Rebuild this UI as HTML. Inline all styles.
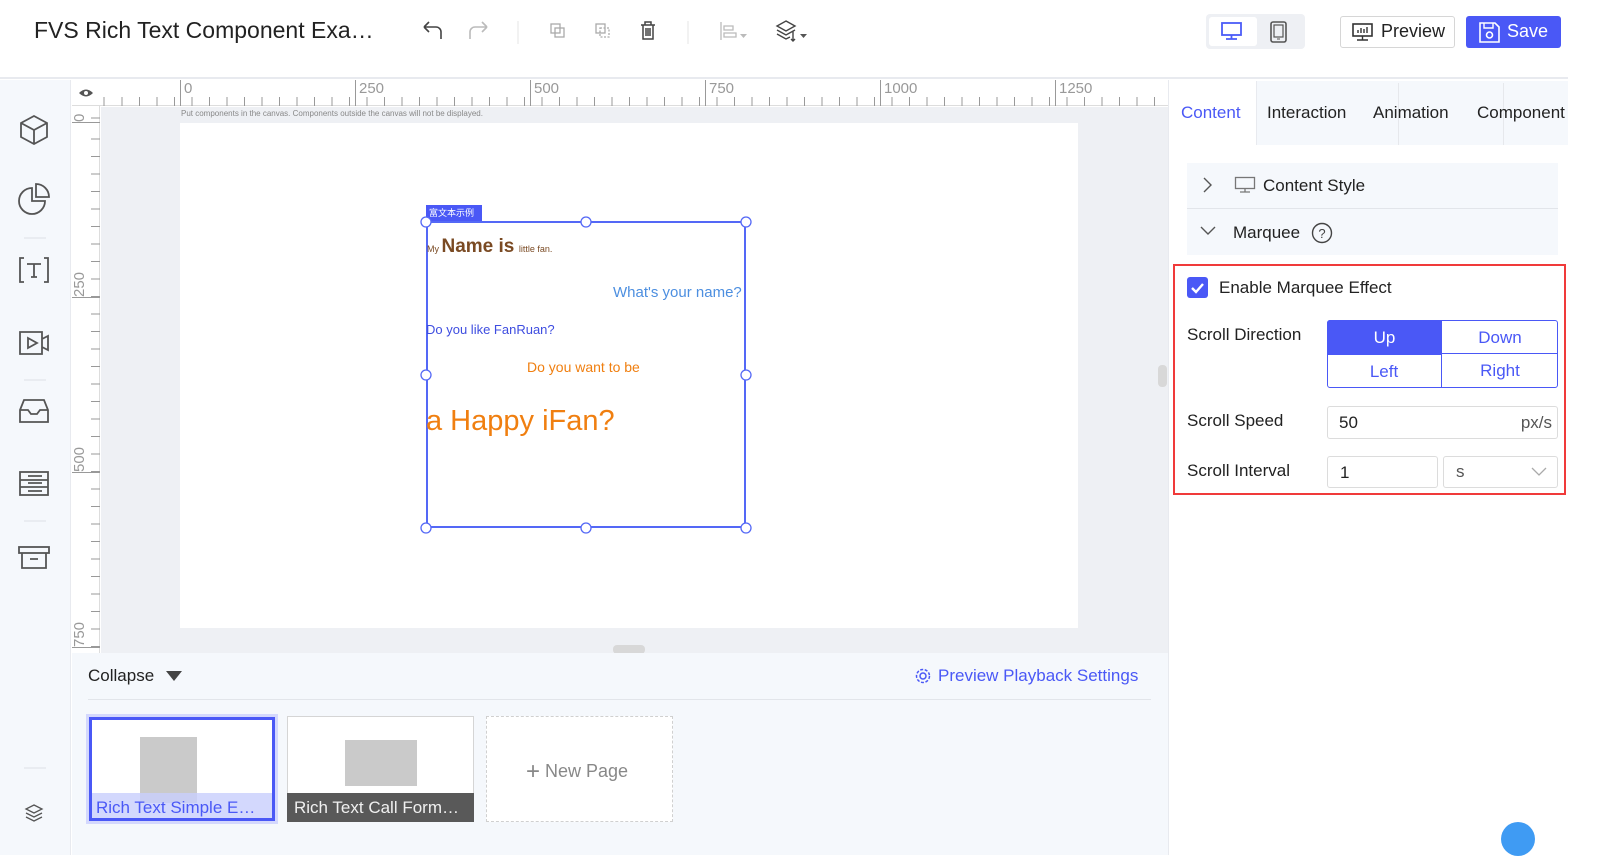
<!DOCTYPE html>
<html><head><meta charset="utf-8"><style>
*{box-sizing:border-box;margin:0;padding:0}
body{width:1610px;height:855px;overflow:hidden;background:#fff;font-family:"Liberation Sans","Noto Sans CJK SC",sans-serif;color:#222;position:relative}
.a{position:absolute}
.ic{stroke:#555;fill:none;stroke-width:1.6}
</style></head><body>
<!-- top bar -->
<div class="a" style="left:0;top:0;width:1568px;height:79px;background:#fff;border-bottom:2px solid #e8eaef"></div>
<div class="a" style="left:34px;top:17px;font-size:23px;color:#222">FVS Rich Text Component Exa…</div>
<svg class="a" style="left:418px;top:18px" width="400" height="28" viewBox="0 0 400 28">
 <path d="M6 9h12a5 5 0 0 1 5 5v7M6 9l5-5M6 9l5 5" stroke="#444" stroke-width="1.6" fill="none"/>
 <path d="M69 9H57a5 5 0 0 0-5 5v7M69 9l-5-5M69 9l-5 5" stroke="#bbb" stroke-width="1.6" fill="none"/>
 <line x1="100" y1="3" x2="100" y2="26" stroke="#e5e5e5"/>
 <rect x="133" y="6" width="9" height="9" stroke="#aaa" fill="none" stroke-width="1.3"/><rect x="137" y="10" width="9" height="9" stroke="#aaa" fill="none" stroke-width="1.3"/>
 <rect x="178" y="6" width="9" height="9" stroke="#aaa" fill="none" stroke-width="1.3"/><rect x="182" y="10" width="9" height="9" stroke="#aaa" fill="none" stroke-dasharray="2 1.5" stroke-width="1.3"/>
 <path d="M223 7h14M227 7V4h6v3M225 7v14h10V7M228 10v8M230 10v8M232 10v8" stroke="#444" stroke-width="1.5" fill="none"/>
 <line x1="270" y1="3" x2="270" y2="26" stroke="#e5e5e5"/>
 <path d="M303 4v18M306 8h9v4h-9zM306 15h12v4h-12z" stroke="#bbb" stroke-width="1.3" fill="none"/><path d="M322 16h7l-3.5 4z" fill="#bbb"/>
 <path d="M368 3l9 5-9 5-9-5zM359 12l9 5 9-5M359 16l9 5 4-2M375 13v10M373 21l2 2 2-2" stroke="#444" stroke-width="1.4" fill="none"/><path d="M382 16h7l-3.5 4z" fill="#555"/>
</svg>
<div class="a" style="left:1206px;top:14px;width:99px;height:35px;background:#eef0f4;border-radius:4px"></div>
<div class="a" style="left:1209px;top:17px;width:48px;height:29px;background:#fff;border-radius:3px"></div>
<svg class="a" style="left:1220px;top:21px" width="24" height="20"><rect x="2" y="2" width="19" height="12" stroke="#4b5cf7" fill="none" stroke-width="1.8"/><path d="M11.5 14v4M6 18h11" stroke="#4b5cf7" stroke-width="1.8"/></svg>
<svg class="a" style="left:1269px;top:20px" width="20" height="24"><rect x="2" y="2" width="15" height="20" rx="2" stroke="#555" fill="none" stroke-width="1.6"/><rect x="5" y="5" width="9" height="12" stroke="#555" fill="none" stroke-width="1.2"/><path d="M8 19h3" stroke="#555"/></svg>
<div class="a" style="left:1340px;top:16px;width:115px;height:32px;border:1px solid #d6d6d6;border-radius:3px;background:#fff"></div>
<svg class="a" style="left:1351px;top:22px" width="24" height="20"><rect x="2" y="2" width="19" height="12" stroke="#333" fill="none" stroke-width="1.6"/><path d="M11.5 14v4M6 18h11M7 11V8M10 11V6M13 11V7M16 11V5" stroke="#333" stroke-width="1.4"/></svg>
<div class="a" style="left:1381px;top:21px;font-size:18px;color:#222">Preview</div>
<div class="a" style="left:1466px;top:16px;width:95px;height:32px;background:#4a58f6;border-radius:3px"></div>
<svg class="a" style="left:1478px;top:21px" width="24" height="24"><path d="M2 2h15l4 4v15H2z" stroke="#fff" fill="none" stroke-width="1.6"/><path d="M6 2v5h9V2" stroke="#fff" fill="none" stroke-width="1.4"/><circle cx="11.5" cy="14" r="3" stroke="#fff" fill="none" stroke-width="1.6"/></svg>
<div class="a" style="left:1507px;top:21px;font-size:18px;color:#fff">Save</div>

<!-- left sidebar -->
<div class="a" style="left:0;top:80px;width:71px;height:775px;background:#f5f8fc;border-right:1px solid #e8eaef"></div>
<svg class="a" style="left:14px;top:110px" width="42" height="720" viewBox="0 0 42 720">
 <g stroke="#555" fill="none" stroke-width="1.8">
 <path d="M20 6l13 7v14l-13 7-13-7V13zM7 13l13 7 13-7M20 20v14"/>
 <path d="M18 78a13 13 0 1 0 13 13H18z"/><path d="M22 74v13h13A13 13 0 0 0 22 74z"/>
 <path d="M6 152v-4h4M30 148h4v4M34 168v4h-4M10 172H6v-4M6 150v20M34 150v20"/><path d="M13 154h14M20 154v13M17 167h6"/>
 <path d="M6 222h22v22H6zM28 229l6-3v14l-6-3"/><path d="M14 228l9 5-9 5z"/>
 <path d="M6 300l4-10h20l4 10v12H6zM6 300h8l3 4h6l3-4h8"/>
 <rect x="6" y="362" width="28" height="23"/><path d="M6 370h28M6 377h28M14 366h14M14 373h14M14 381h14"/>
 <rect x="5" y="437" width="30" height="6"/><path d="M8 443v15h24v-15M16 449h8"/>
 </g>
 <path d="M10 128h22M10 270h22M10 411h22M10 658h22" stroke="#e2e5ea" stroke-width="1.2"/>
 <g stroke="#555" fill="none" stroke-width="1.3"><path d="M20 695l8 4-8 4-8-4zM12 703l8 4 8-4M12 707l8 4 8-4"/></g>
</svg>

<!-- rulers -->
<div class="a" style="left:72px;top:80px;width:1096px;height:26px;background:#fff;border-bottom:1px solid #ddd"></div>
<div class="a" style="left:100px;top:97px;width:1068px;height:9px;background:repeating-linear-gradient(90deg,transparent 0,transparent 16.5px,#999 16.5px,#999 17.5px);background-position:5px 0"></div>
<div class="a" style="left:72px;top:106px;width:28px;height:548px;background:#fff;border-right:1px solid #ddd"></div>
<div class="a" style="left:91px;top:106px;width:9px;height:546px;background:repeating-linear-gradient(180deg,transparent 0,transparent 16.5px,#999 16.5px,#999 17.5px);background-position:0 16px"></div>
<svg class="a" style="left:78px;top:87px" width="16" height="12"><path d="M1 6q7-7 14 0q-7 7-14 0z" fill="#555"/><circle cx="8" cy="6" r="2" fill="#fff"/></svg>
<div class="a" style="left:180px;top:80px;font-size:15px;color:#999;line-height:18px">
<div class="a" style="left:0;top:0;border-left:1px solid #999;height:26px;padding-left:3px">0</div>
<div class="a" style="left:175px;top:0;border-left:1px solid #999;height:26px;padding-left:3px">250</div>
<div class="a" style="left:350px;top:0;border-left:1px solid #999;height:26px;padding-left:3px">500</div>
<div class="a" style="left:525px;top:0;border-left:1px solid #999;height:26px;padding-left:3px">750</div>
<div class="a" style="left:700px;top:0;border-left:1px solid #999;height:26px;padding-left:3px">1000</div>
<div class="a" style="left:875px;top:0;border-left:1px solid #999;height:26px;padding-left:3px">1250</div>
</div>
<div class="a" style="left:72px;top:122px;width:28px;font-size:15px;color:#999">
<div class="a" style="left:0;top:0;width:28px;border-top:1px solid #999"></div>
<div class="a" style="left:0;top:175px;width:28px;border-top:1px solid #999"></div>
<div class="a" style="left:0;top:350px;width:28px;border-top:1px solid #999"></div>
<div class="a" style="left:0;top:525px;width:28px;border-top:1px solid #999"></div>
<div class="a" style="left:0;top:-9px;transform:rotate(-90deg);transform-origin:0 0;top:0px;line-height:16px">0</div>
<div class="a" style="left:0;top:175px;transform:rotate(-90deg);transform-origin:0 0;line-height:16px">250</div>
<div class="a" style="left:0;top:350px;transform:rotate(-90deg);transform-origin:0 0;line-height:16px">500</div>
<div class="a" style="left:0;top:525px;transform:rotate(-90deg);transform-origin:0 0;line-height:16px">750</div>
</div>

<!-- canvas -->
<div class="a" style="left:101px;top:107px;width:1067px;height:546px;background:#eef0f4"></div>
<div class="a" style="left:181px;top:109px;font-size:8px;color:#888">Put components in the canvas. Components outside the canvas will not be displayed.</div>
<div class="a" style="left:180px;top:123px;width:898px;height:505px;background:#fff"></div>
<div class="a" style="left:1158px;top:365px;width:9px;height:22px;background:#d8d8d8;border-radius:4px"></div>
<div class="a" style="left:613px;top:645px;width:32px;height:9px;background:#d8d8d8;border-radius:4px"></div>
<!-- component -->
<div class="a" style="left:426px;top:205px;width:56px;height:16px;background:#4a58f6;color:#fff;font-size:9px;line-height:16px;padding-left:3px">富文本示例一</div>
<div class="a" style="left:426px;top:221px;width:320px;height:307px;border:2px solid #5468f6"></div>
<div class="a" style="left:427px;top:236px;white-space:nowrap;color:#7a4a23"><span style="font-size:9px">My </span><b style="font-size:19px">Name is</b> <span style="font-size:9px">little fan.</span></div>
<div class="a" style="left:613px;top:284px;font-size:15px;color:#4d8fe0">What's your name?</div>
<div class="a" style="left:426px;top:322px;font-size:13px;color:#3e4de0">Do you like FanRuan?</div>
<div class="a" style="left:527px;top:359px;font-size:14px;color:#f07f10">Do you want to be</div>
<div class="a" style="left:426px;top:405px;font-size:29px;color:#f07f10">a Happy iFan?</div>
<svg class="a" style="left:418px;top:214px" width="340" height="322"><g fill="#fff" stroke="#5468f6" stroke-width="1.3"><circle cx="8" cy="8" r="5"/><circle cx="168" cy="8" r="5"/><circle cx="328" cy="8" r="5"/><circle cx="8" cy="161" r="5"/><circle cx="328" cy="161" r="5"/><circle cx="8" cy="314" r="5"/><circle cx="168" cy="314" r="5"/><circle cx="328" cy="314" r="5"/></g></svg>

<!-- bottom panel -->
<div class="a" style="left:72px;top:653px;width:1096px;height:202px;background:#f5f8fc"></div>
<div class="a" style="left:88px;top:666px;font-size:17px;color:#222">Collapse</div>
<svg class="a" style="left:165px;top:670px" width="18" height="12"><path d="M1 1h16l-8 10z" fill="#444"/></svg>
<svg class="a" style="left:914px;top:667px" width="18" height="18"><circle cx="9" cy="9" r="3" stroke="#4a58f6" fill="none" stroke-width="1.5"/><circle cx="9" cy="9" r="6.5" stroke="#4a58f6" fill="none" stroke-width="1.5" stroke-dasharray="3 1.6"/></svg>
<div class="a" style="left:938px;top:666px;font-size:17px;color:#4a58f6">Preview Playback Settings</div>
<div class="a" style="left:88px;top:699px;width:1063px;height:1px;background:#e2e5ea"></div>
<div class="a" style="left:86px;top:714px;width:192px;height:110px;background:#d4d8fd"></div>
<div class="a" style="left:89px;top:717px;width:186px;height:104px;background:#fff;border:3px solid #4a58f6"></div>
<div class="a" style="left:140px;top:737px;width:57px;height:66px;background:#cacaca"></div>
<div class="a" style="left:92px;top:793px;width:180px;height:25px;background:rgba(200,206,253,0.8);color:#4a58f6;font-size:17px;line-height:29px;padding-left:4px;white-space:nowrap">Rich Text Simple E…</div>
<div class="a" style="left:287px;top:716px;width:187px;height:106px;background:#fff;border:1px solid #d5d5d5"></div>
<div class="a" style="left:345px;top:740px;width:72px;height:46px;background:#cacaca"></div>
<div class="a" style="left:287px;top:793px;width:187px;height:29px;background:#595959;color:#f0f0f0;font-size:17px;line-height:29px;padding-left:7px;white-space:nowrap">Rich Text Call Form…</div>
<div class="a" style="left:486px;top:716px;width:187px;height:106px;background:#fff;border:1px dashed #d0d0d0"></div>
<div class="a" style="left:526px;top:758px;font-size:18px;color:#888"><span style="font-size:24px;font-weight:300;vertical-align:-2px">+</span> New Page</div>

<!-- right panel -->
<div class="a" style="left:1168px;top:80px;width:400px;height:775px;background:#fff;border-left:1px solid #e8eaef"></div>
<div class="a" style="left:1169px;top:81px;width:399px;height:64px;background:#f5f8fc"></div>
<div class="a" style="left:1169px;top:81px;width:88px;height:64px;background:#fff;border-right:1px solid #e8eaef"></div>
<div class="a" style="left:1398px;top:83px;width:1px;height:62px;background:#e6e8ec"></div>
<div class="a" style="left:1503px;top:83px;width:1px;height:62px;background:#e6e8ec"></div>
<div class="a" style="left:1181px;top:103px;font-size:17px;color:#4a58f6">Content</div>
<div class="a" style="left:1267px;top:103px;font-size:17px;color:#222">Interaction</div>
<div class="a" style="left:1373px;top:103px;font-size:17px;color:#222">Animation</div>
<div class="a" style="left:1477px;top:103px;font-size:17px;color:#222;white-space:nowrap">Component</div>
<div class="a" style="left:1187px;top:163px;width:371px;height:92px;background:#f5f8fc"></div>
<div class="a" style="left:1187px;top:208px;width:371px;height:1px;background:#e2e5ea"></div>
<svg class="a" style="left:1200px;top:176px" width="16" height="18"><path d="M4 2l7 7-7 7" stroke="#555" fill="none" stroke-width="1.4"/></svg>
<svg class="a" style="left:1234px;top:176px" width="24" height="18"><rect x="1.5" y="1.5" width="19" height="11" stroke="#777" fill="none" stroke-width="1.3"/><path d="M11 13v3M6 16h10" stroke="#777" stroke-width="1.3"/></svg>
<div class="a" style="left:1263px;top:176px;font-size:17px;color:#222">Content Style</div>
<svg class="a" style="left:1199px;top:224px" width="18" height="14"><path d="M2 3l7 7 7-7" stroke="#555" fill="none" stroke-width="1.4"/></svg>
<div class="a" style="left:1233px;top:223px;font-size:17px;color:#222">Marquee</div>
<svg class="a" style="left:1311px;top:222px" width="22" height="22"><circle cx="11" cy="11" r="9.5" stroke="#444" fill="none" stroke-width="1.4"/><text x="11" y="16" text-anchor="middle" font-size="13" fill="#444" font-family="Liberation Sans">?</text></svg>
<div class="a" style="left:1173px;top:264px;width:393px;height:231px;border:2px solid #f03a3a"></div>
<div class="a" style="left:1187px;top:277px;width:21px;height:21px;background:#4a58f6;border-radius:3px"></div>
<svg class="a" style="left:1187px;top:277px" width="21" height="21"><path d="M5 11l4 4 7-8" stroke="#fff" stroke-width="2.4" fill="none"/></svg>
<div class="a" style="left:1219px;top:278px;font-size:17px;color:#222">Enable Marquee Effect</div>
<div class="a" style="left:1187px;top:325px;font-size:17px;color:#222">Scroll Direction</div>
<div class="a" style="left:1327px;top:320px;width:231px;height:68px;border:1px solid #4a58f6;border-radius:3px"></div>
<div class="a" style="left:1327px;top:320px;width:115px;height:34px;background:#4a58f6;border-radius:3px 0 0 0;color:#fff;font-size:17px;text-align:center;line-height:35px">Up</div>
<div class="a" style="left:1442px;top:320px;width:116px;height:34px;color:#4a58f6;font-size:17px;text-align:center;line-height:35px;border-bottom:1px solid #4a58f6">Down</div>
<div class="a" style="left:1327px;top:354px;width:115px;height:34px;color:#4a58f6;font-size:17px;text-align:center;line-height:34px;border-right:1px solid #4a58f6;border-top:1px solid #4a58f6">Left</div>
<div class="a" style="left:1442px;top:354px;width:116px;height:34px;color:#4a58f6;font-size:17px;text-align:center;line-height:34px">Right</div>
<div class="a" style="left:1187px;top:411px;font-size:17px;color:#222">Scroll Speed</div>
<div class="a" style="left:1327px;top:406px;width:231px;height:33px;border:1px solid #dcdcdc;border-radius:3px;font-size:17px;line-height:31px;padding-left:11px">50<span style="position:absolute;right:5px;color:#555">px/s</span></div>
<div class="a" style="left:1187px;top:461px;font-size:17px;color:#222">Scroll Interval</div>
<div class="a" style="left:1327px;top:456px;width:111px;height:32px;border:1px solid #dcdcdc;border-radius:3px;font-size:17px;line-height:31px;padding-left:12px">1</div>
<div class="a" style="left:1443px;top:456px;width:115px;height:32px;border:1px solid #dcdcdc;border-radius:3px;font-size:17px;line-height:30px;padding-left:12px;color:#555">s</div>
<svg class="a" style="left:1530px;top:465px" width="18" height="14"><path d="M2 3l7 7 7-7" stroke="#aaa" fill="none" stroke-width="1.3"/></svg>
<div class="a" style="left:1501px;top:822px;width:34px;height:34px;border-radius:50%;background:#3f9bf3"></div>
<div class="a" style="left:1568px;top:0;width:42px;height:855px;background:#fff"></div>
</body></html>
